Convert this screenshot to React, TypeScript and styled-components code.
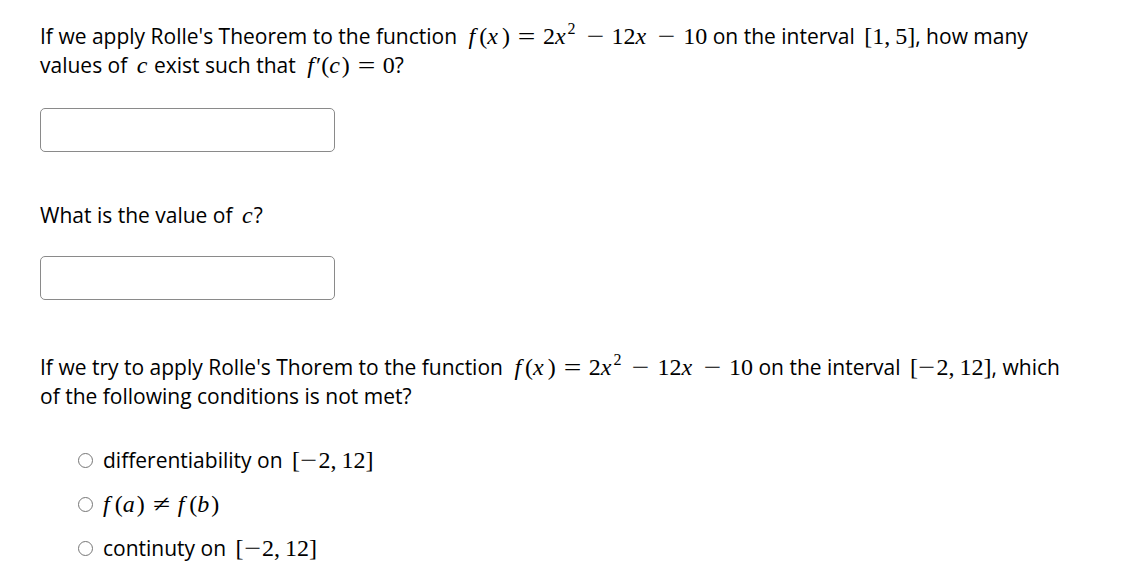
import React from "react";
import styled, { createGlobalStyle } from "styled-components";

const Global = createGlobalStyle`
  html, body { margin: 0; padding: 0; background: #fff; }
  body { font-family: "Open Sans", "DejaVu Sans", sans-serif; color: #000; }
`;

const Page = styled.div`
  padding: 22px 46px 0 40px;
  display: flex;
  flex-direction: column;
`;

const Para = styled.p<{ $mt?: number }>`
  margin: ${(p) => p.$mt ?? 0}px 0 0 0;
  font-size: 21px;
  line-height: 29px;
`;

const M = styled.span<{ $l?: number }>`
  font-family: "Liberation Serif", "DejaVu Serif", serif;
  font-size: 24px;
  line-height: 1;
  white-space: nowrap;
  margin-left: ${(p) => p.$l ?? 4}px;
`;

const V = styled.i<{ $r?: number }>`
  font-family: "Liberation Serif", "DejaVu Serif", serif;
  font-style: italic;
  padding-right: ${(p) => p.$r ?? 4}px;
`;

const Sup = styled.sup`
  font-size: 16px;
  line-height: 0;
  vertical-align: 10px;
  margin: 0 3px 0 2px;
`;

const Op = styled.span<{ $w?: number }>`
  display: inline-block;
  width: 17px;
  text-align: center;
  margin: 0 ${(p) => p.$w ?? 8}px;
  transform: scaleX(1.3);
`;

const Neg = styled.span`
  display: inline-block;
  margin: 0 3px 0 2px;
  transform: scaleX(1.25);
`;

const Comma = styled.span`
  margin-right: 5px;
`;

const Input = styled.div<{ $mt: number }>`
  margin-top: ${(p) => p.$mt}px;
  width: 293px;
  height: 42px;
  border: 1px solid #8a8a8a;
  border-radius: 5px;
`;

const Options = styled.div`
  margin-top: 34px;
  padding-left: 38px;
  display: flex;
  flex-direction: column;
  gap: 14px;
`;

const Option = styled.label`
  display: flex;
  align-items: center;
  gap: 10px;
  font-size: 21px;
  height: 30px;
`;

const Radio = styled.span`
  width: 13px;
  height: 13px;
  border: 1px solid #767676;
  border-radius: 50%;
  flex-shrink: 0;
`;

const Fx = () => (
  <M $l={6}>
    <V $r={4}>f</V>(<V>x</V>)<Op $w={8}>=</Op>2<V $r={0}>x</V>
    <Sup>2</Sup>
    <Op>−</Op>12<V>x</V>
    <Op>−</Op>10
  </M>
);

const Interval = ({ a, neg, b }: { a: string; neg?: boolean; b: string }) => (
  <M>
    [{neg && <Neg>−</Neg>}
    {a}
    <Comma>,</Comma>
    {b}]
  </M>
);

export default function App() {
  return (
    <>
      <Global />
      <Page>
        <Para>
          If we apply Rolle's Theorem to the function <Fx /> on the interval{" "}
          <Interval a="1" b="5" />, how many values of{" "}
          <M>
            <V $r={1}>c</V>
          </M>{" "}
          exist such that{" "}
          <M $l={6}>
            <V $r={2}>f</V>′(<V $r={2}>c</V>)<Op $w={8}>=</Op>0
          </M>
          ?
        </Para>
        <Input $mt={28} />
        <Para $mt={49}>
          What is the value of{" "}
          <M>
            <V $r={1}>c</V>
          </M>
          ?
        </Para>
        <Input $mt={26} />
        <Para $mt={53}>
          If we try to apply Rolle's Thorem to the function <Fx /> on the interval{" "}
          <Interval neg a="2" b="12" />, which of the following conditions is not met?
        </Para>
        <Options>
          <Option>
            <Radio />
            <span>
              differentiability on <Interval neg a="2" b="12" />
            </span>
          </Option>
          <Option>
            <Radio />
            <M $l={0}>
              <V $r={5}>f</V>(<V $r={2}>a</V>)<Op $w={8}>≠</Op>
              <V $r={5}>f</V>(<V $r={2}>b</V>)
            </M>
          </Option>
          <Option>
            <Radio />
            <span>
              continuty on <Interval neg a="2" b="12" />
            </span>
          </Option>
        </Options>
      </Page>
    </>
  );
}
